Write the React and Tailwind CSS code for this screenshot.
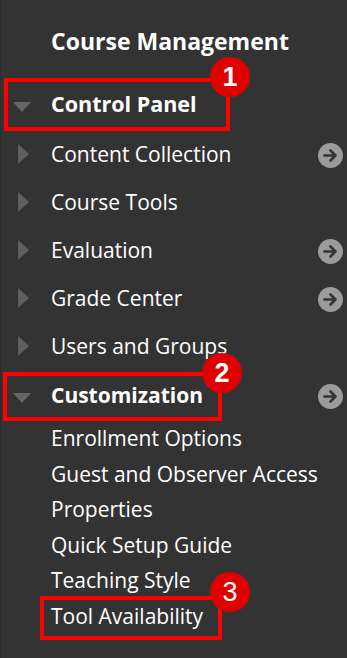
import React from "react";

const ArrowCircle = () => (
  <svg width="25" height="25" viewBox="0 0 25 25" className="ml-auto mr-[4px] shrink-0">
    <circle cx="12.5" cy="12.5" r="12.5" fill="#9b9b9b" />
    <path d="M6.5 12.5 H17.5 M12.5 7.5 L17.5 12.5 L12.5 17.5" stroke="#333333" strokeWidth="2.6" fill="none" strokeLinecap="round" strokeLinejoin="round" />
  </svg>
);

const RightTri = () => (
  <div className="w-[50px] shrink-0 pl-[17px] flex items-center">
    <div className="mb-[3px] w-0 h-0 border-y-[10px] border-y-transparent border-l-[11px] border-l-[#5f5f5f]" />
  </div>
);

const DownTri = () => (
  <div className="w-[50px] shrink-0 pl-[12px] flex items-center">
    <div className="mt-[4px] w-0 h-0 border-x-[9.5px] border-x-transparent border-t-[10px] border-t-[#666666]" />
  </div>
);

const Badge = ({ n, className }) => (
  <div
    className={`absolute w-10 h-10 rounded-full bg-[#e00000] text-white flex items-center justify-center text-[27px] leading-none ${className}`}
    style={{ fontFamily: '"Liberation Sans", Arial, sans-serif' }}
  >
    {n}
  </div>
);

const items = [
  { label: "Content Collection", arrow: true },
  { label: "Course Tools", arrow: false },
  { label: "Evaluation", arrow: true },
  { label: "Grade Center", arrow: true },
  { label: "Users and Groups", arrow: false },
];

const subItems = [
  "Enrollment Options",
  "Guest and Observer Access",
  "Properties",
  "Quick Setup Guide",
  "Teaching Style",
];

export default function App() {
  return (
    <div
      className="w-[347px] h-[658px] bg-[#333333] text-white border-l border-[#2a2a2a] overflow-hidden flex flex-col"
      style={{ fontFamily: '"Open Sans", "Noto Sans", sans-serif' }}
    >
      <div className="h-[78px] shrink-0 pt-[17px]">
        <div className="h-12 flex items-center pl-[50px] text-[23px] font-bold">Course Management</div>
      </div>

      <div className="relative h-[53px] shrink-0 flex items-center text-[21.5px] font-bold">
        <DownTri />
        <span>Control Panel</span>
        <div className="absolute left-[3px] top-0 w-[226px] h-[53px] border-4 border-[#ff0000]" />
        <Badge n="1" className="left-[209px] -top-[21px]" />
      </div>

      {items.map((it) => (
        <div key={it.label} className="h-12 shrink-0 flex items-center text-[21px]">
          <RightTri />
          <span>{it.label}</span>
          {it.arrow && <ArrowCircle />}
        </div>
      ))}

      <div className="relative h-[50px] shrink-0 flex items-center text-[21px] font-bold">
        <DownTri />
        <span>Customization</span>
        <ArrowCircle />
        <div className="absolute left-[2px] top-px w-[219px] h-[49px] border-4 border-[#ff0000]" />
        <Badge n="2" className="left-[201px] -top-[18px]" />
      </div>

      <div className="flex flex-col pl-[50px] text-[21px]">
        {subItems.map((s) => (
          <div key={s} className="h-[35.5px] flex items-center">
            {s}
          </div>
        ))}
        <div className="relative h-[35.5px] flex items-center">
          Tool Availability
          <div className="absolute -left-[11px] -top-[2.5px] w-[182px] h-[44px] border-4 border-[#ff0000]" />
          <Badge n="3" className="left-[159px] -top-[26.5px]" />
        </div>
      </div>
    </div>
  );
}
